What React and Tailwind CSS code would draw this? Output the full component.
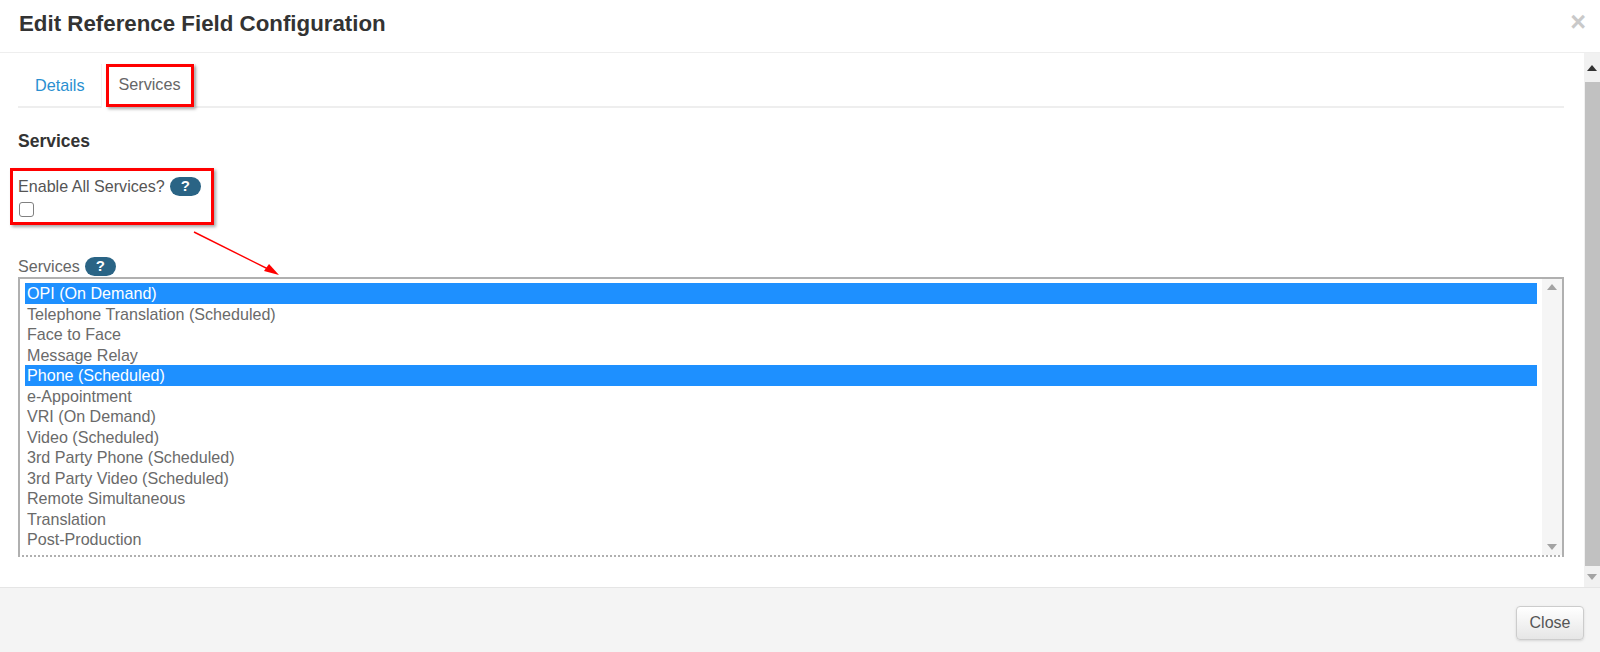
const services = [
  { name: 'OPI (On Demand)', selected: true },
  { name: 'Telephone Translation (Scheduled)' },
  { name: 'Face to Face' },
  { name: 'Message Relay' },
  { name: 'Phone (Scheduled)', selected: true },
  { name: 'e-Appointment' },
  { name: 'VRI (On Demand)' },
  { name: 'Video (Scheduled)' },
  { name: '3rd Party Phone (Scheduled)' },
  { name: '3rd Party Video (Scheduled)' },
  { name: 'Remote Simultaneous' },
  { name: 'Translation' },
  { name: 'Post-Production' },
];

function HelpBadge() {
  return (
    <span className="inline-flex h-[19px] w-[31px] items-center justify-center rounded-full bg-[#2a6485] text-[15px] font-bold text-white">?</span>
  );
}

function Arrow({ dir }) {
  return (
    <svg width="10" height="6" viewBox="0 0 10 6" className="fill-current">
      <path d={dir === 'up' ? 'M5 0l5 6H0z' : 'M0 0h10L5 6z'} />
    </svg>
  );
}

export default function App() {
  return (
    <div className="relative flex h-[652px] w-[1600px] flex-col overflow-hidden bg-white font-['Liberation_Sans',Arial,sans-serif] text-[#555]">
      <div className="flex h-[53px] flex-none items-start justify-between border-b border-[#eee] pl-[19px] pr-[14px] pt-[10px]">
        <h1 className="text-[22.3px] leading-[28px] font-bold text-[#333]">Edit Reference Field Configuration</h1>
        <span className="text-[27px] leading-[24px] font-bold text-[#c9c9c9]">×</span>
      </div>

      <div className="flex min-h-0 flex-1">
        <div className="min-w-0 flex-1 pl-[18px] pr-[20px] pt-[11px]">
          <div className="flex h-[44px] border-b-2 border-[#eee] text-[16.2px]">
            <div className="flex h-[44px] items-center pb-[2px] pl-[17px] pr-[17px] text-[#2a8fd0]">Details</div>
            <div className="flex h-[44px] items-center border-x border-[#f2f2f2] bg-white pb-[3px] pl-[16px] pr-[14px] text-[#666]">Services</div>
          </div>

          <h2 className="mt-[22px] text-[17.5px] leading-[22px] font-bold text-[#333]">Services</h2>

          <div className="mt-[23px] flex items-center gap-[5px] text-[16.1px] leading-[22px]">
            Enable All Services? <HelpBadge />
          </div>
          <div className="ml-[1px] mt-[5px] h-[15px] w-[15px] rounded-[3px] border border-[#808080] bg-white" />

          <div className="mt-[39px] flex items-center gap-[5px] text-[16.1px] leading-[20px] text-[#666]">
            Services <HelpBadge />
          </div>

          <div className="mt-[1px] flex h-[280px] border-2 border-[#b0b0b0] [border-bottom-style:dotted] text-[16.1px] leading-[20.5px]">
            <div className="min-w-0 flex-1 pl-[5px] pr-[5px] pt-[4px]">
              {services.map(s => (
                <div
                  key={s.name}
                  className={s.selected ? 'h-[20.5px] bg-[#1e90ff] pl-[2px] text-white' : 'h-[20.5px] pl-[2px] text-[#6a6a6a]'}
                >
                  {s.name}
                </div>
              ))}
            </div>
            <div className="flex w-[20px] flex-none flex-col items-center justify-between bg-[#f5f5f5] py-[5px] text-[#a3a3a3]">
              <Arrow dir="up" />
              <Arrow dir="down" />
            </div>
          </div>
        </div>

        <div className="flex w-[16px] flex-none flex-col bg-[#f1f1f1]">
          <div className="flex h-[29px] items-center justify-center text-[#333]"><Arrow dir="up" /></div>
          <div className="ml-[1px] flex-1 bg-[#c1c1c1]" />
          <div className="flex h-[21px] items-center justify-center text-[#a3a3a3]"><Arrow dir="down" /></div>
        </div>
      </div>

      <div className="flex h-[65px] flex-none items-start justify-end border-t border-[#e5e5e5] bg-[#f4f4f4] pr-[16px] pt-[18px]">
        <button className="h-[34px] w-[68px] rounded-[4px] border border-[#ccc] bg-gradient-to-b from-white to-[#e6e6e6] text-[16px] text-[#555] shadow-sm">Close</button>
      </div>

      {/* red callouts drawn over the screenshot */}
      <div className="absolute left-[106px] top-[64px] h-[43px] w-[88px] border-[3px] border-[#f00] shadow-[2px_2px_3px_rgba(0,0,0,0.35)]" />
      <div className="absolute left-[10px] top-[168px] h-[57px] w-[204px] border-[3px] border-[#f00] shadow-[2px_2px_3px_rgba(0,0,0,0.35)]" />
      <svg className="absolute left-[190px] top-[228px]" width="94" height="52" viewBox="0 0 94 52">
        <path d="M4 4L80 42" stroke="#f00" strokeWidth="1.4" fill="none" />
        <path d="M89 47L74 43L79 36z" fill="#f00" />
      </svg>
    </div>
  );
}
